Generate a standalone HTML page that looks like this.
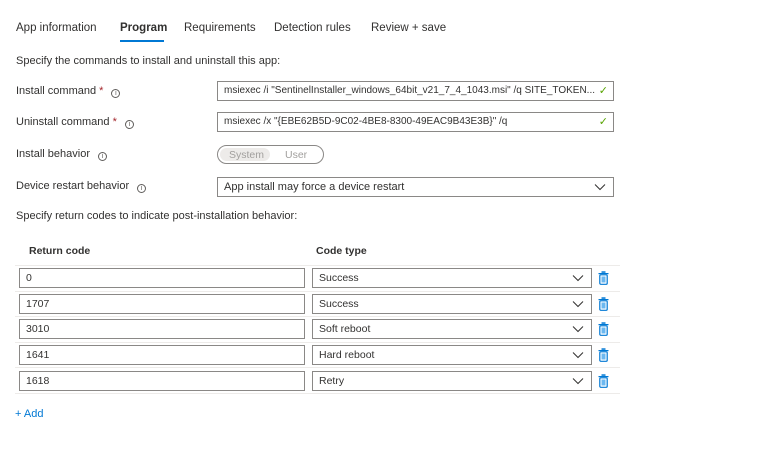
<!DOCTYPE html>
<html><head><style>
*{box-sizing:border-box;margin:0;padding:0}
body{width:768px;height:450px;background:#fff;font-family:"Liberation Sans",sans-serif;font-size:11px;color:#323130;position:relative;overflow:hidden}
.a{position:absolute;white-space:nowrap}
.tab{top:22px;font-size:11.5px;color:#323130}
.inp{position:absolute;border:1px solid #8a8886;background:#fff;height:20px;padding:0 6px;line-height:18px;font-size:10.5px;color:#323130;white-space:nowrap;overflow:hidden}
.info{display:inline-block;width:9px;height:9px;border:1px solid #605e5c;border-radius:50%;font-size:7px;line-height:7px;text-align:center;color:#605e5c;margin-left:8px;vertical-align:-1px}
.req{color:#a4262c}
.chk{position:absolute;right:5px;top:0;color:#57a300;font-size:11px;background:#fff;padding-left:3px}
.chev{position:absolute;right:7px;top:4px;width:12px;height:10px}
.sep{position:absolute;left:15px;width:605px;height:1px;background:#edebe9}
.trash{position:absolute;left:598px;width:11px;height:14px}
</style></head><body>
<div class="a tab" style="left:16px">App information</div>
<div class="a tab" style="left:120px;font-weight:bold">Program</div>
<div style="position:absolute;left:120px;top:40px;width:44px;height:2px;background:#0078d4"></div>
<div class="a tab" style="left:184px">Requirements</div>
<div class="a tab" style="left:274px">Detection rules</div>
<div class="a tab" style="left:371px">Review + save</div>

<div class="a" style="left:16px;top:55px">Specify the commands to install and uninstall this app:</div>

<div class="a" style="left:16px;top:85px">Install command <span class="req">*</span><span class="info">i</span></div>
<div class="inp" style="left:217px;top:81px;width:397px;font-size:10px">msiexec /i "SentinelInstaller_windows_64bit_v21_7_4_1043.msi" /q SITE_TOKEN...<span class="chk">✓</span></div>

<div class="a" style="left:16px;top:116px">Uninstall command <span class="req">*</span><span class="info">i</span></div>
<div class="inp" style="left:217px;top:112px;width:397px;font-size:10px">msiexec /x "{EBE62B5D-9C02-4BE8-8300-49EAC9B43E3B}" /q<span class="chk">✓</span></div>

<div class="a" style="left:16px;top:148px">Install behavior<span class="info">i</span></div>
<div style="position:absolute;left:217px;top:145px;width:107px;height:19px;border:1px solid #8a8886;border-radius:10px">
<div style="position:absolute;left:2px;top:2px;width:50px;height:13px;border-radius:7px;background:#edebe9"></div>
<div class="a" style="left:11px;top:3px;color:#a19f9d;font-size:10.5px">System</div>
<div class="a" style="left:67px;top:3px;color:#a19f9d;font-size:10.5px">User</div>
</div>

<div class="a" style="left:16px;top:180px">Device restart behavior<span class="info">i</span></div>
<div class="inp" style="left:217px;top:177px;width:397px;font-size:11px">App install may force a device restart<svg class="chev" viewBox="0 0 12 10"><path d="M1 2.5l5 5 5-5" fill="none" stroke="#323130" stroke-width="1"/></svg></div>

<div class="a" style="left:16px;top:210px">Specify return codes to indicate post-installation behavior:</div>

<div class="a" style="left:29px;top:245px;font-weight:bold;font-size:10.5px">Return code</div>
<div class="a" style="left:316px;top:245px;font-weight:bold;font-size:10.5px">Code type</div>
<div class="sep" style="top:265px"></div>

<div class="inp" style="left:19px;top:268px;width:286px">0</div>
<div class="inp" style="left:312px;top:268px;width:280px">Success<svg class="chev" viewBox="0 0 12 10"><path d="M1 2.5l5 5 5-5" fill="none" stroke="#323130"/></svg></div>
<svg class="trash" style="top:271px" viewBox="0 0 11 14"><rect x="0.5" y="2" width="10" height="1.2" fill="#0078d4"/><rect x="3.5" y="0.3" width="4" height="1.5" fill="#0078d4"/><rect x="1.8" y="3.8" width="7.4" height="9.5" rx="1" fill="none" stroke="#0078d4" stroke-width="1.2"/><rect x="3.5" y="5.5" width="4" height="6" fill="#6cb8f0"/></svg>
<div class="sep" style="top:291px"></div>

<div class="inp" style="left:19px;top:294px;width:286px">1707</div>
<div class="inp" style="left:312px;top:294px;width:280px">Success<svg class="chev" viewBox="0 0 12 10"><path d="M1 2.5l5 5 5-5" fill="none" stroke="#323130"/></svg></div>
<svg class="trash" style="top:297px" viewBox="0 0 11 14"><rect x="0.5" y="2" width="10" height="1.2" fill="#0078d4"/><rect x="3.5" y="0.3" width="4" height="1.5" fill="#0078d4"/><rect x="1.8" y="3.8" width="7.4" height="9.5" rx="1" fill="none" stroke="#0078d4" stroke-width="1.2"/><rect x="3.5" y="5.5" width="4" height="6" fill="#6cb8f0"/></svg>
<div class="sep" style="top:316px"></div>

<div class="inp" style="left:19px;top:319px;width:286px">3010</div>
<div class="inp" style="left:312px;top:319px;width:280px">Soft reboot<svg class="chev" viewBox="0 0 12 10"><path d="M1 2.5l5 5 5-5" fill="none" stroke="#323130"/></svg></div>
<svg class="trash" style="top:322px" viewBox="0 0 11 14"><rect x="0.5" y="2" width="10" height="1.2" fill="#0078d4"/><rect x="3.5" y="0.3" width="4" height="1.5" fill="#0078d4"/><rect x="1.8" y="3.8" width="7.4" height="9.5" rx="1" fill="none" stroke="#0078d4" stroke-width="1.2"/><rect x="3.5" y="5.5" width="4" height="6" fill="#6cb8f0"/></svg>
<div class="sep" style="top:342px"></div>

<div class="inp" style="left:19px;top:345px;width:286px">1641</div>
<div class="inp" style="left:312px;top:345px;width:280px">Hard reboot<svg class="chev" viewBox="0 0 12 10"><path d="M1 2.5l5 5 5-5" fill="none" stroke="#323130"/></svg></div>
<svg class="trash" style="top:348px" viewBox="0 0 11 14"><rect x="0.5" y="2" width="10" height="1.2" fill="#0078d4"/><rect x="3.5" y="0.3" width="4" height="1.5" fill="#0078d4"/><rect x="1.8" y="3.8" width="7.4" height="9.5" rx="1" fill="none" stroke="#0078d4" stroke-width="1.2"/><rect x="3.5" y="5.5" width="4" height="6" fill="#6cb8f0"/></svg>
<div class="sep" style="top:367px"></div>

<div class="inp" style="left:19px;top:371px;width:286px">1618</div>
<div class="inp" style="left:312px;top:371px;width:280px">Retry<svg class="chev" viewBox="0 0 12 10"><path d="M1 2.5l5 5 5-5" fill="none" stroke="#323130"/></svg></div>
<svg class="trash" style="top:374px" viewBox="0 0 11 14"><rect x="0.5" y="2" width="10" height="1.2" fill="#0078d4"/><rect x="3.5" y="0.3" width="4" height="1.5" fill="#0078d4"/><rect x="1.8" y="3.8" width="7.4" height="9.5" rx="1" fill="none" stroke="#0078d4" stroke-width="1.2"/><rect x="3.5" y="5.5" width="4" height="6" fill="#6cb8f0"/></svg>
<div class="sep" style="top:393px"></div>

<div class="a" style="left:15px;top:408px;color:#0078d4">+ Add</div>
</body></html>
